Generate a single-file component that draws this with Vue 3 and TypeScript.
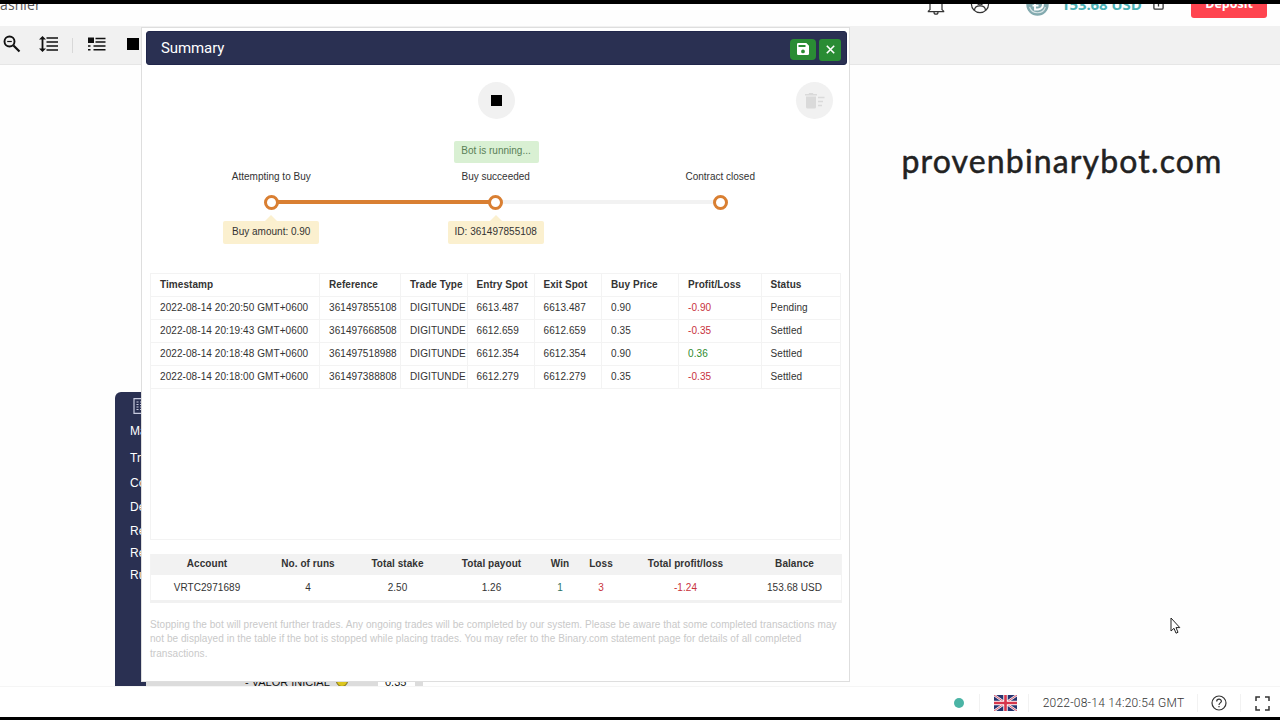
<script setup lang="ts">
interface Trade {
  time: string
  ref: string
  entry: string
  price: string
  profit: string
  status: string
}

const columns: string[] = ['Timestamp', 'Reference', 'Trade Type', 'Entry Spot', 'Exit Spot', 'Buy Price', 'Profit/Loss', 'Status']

const trades: Trade[] = [
  { time: '2022-08-14 20:20:50 GMT+0600', ref: '361497855108', entry: '6613.487', price: '0.90', profit: '-0.90', status: 'Pending' },
  { time: '2022-08-14 20:19:43 GMT+0600', ref: '361497668508', entry: '6612.659', price: '0.35', profit: '-0.35', status: 'Settled' },
  { time: '2022-08-14 20:18:48 GMT+0600', ref: '361497518988', entry: '6612.354', price: '0.90', profit: '0.36', status: 'Settled' },
  { time: '2022-08-14 20:18:00 GMT+0600', ref: '361497388808', entry: '6612.279', price: '0.35', profit: '-0.35', status: 'Settled' },
]

const totals: { label: string; value: string; tone?: string }[] = [
  { label: 'Account', value: 'VRTC2971689' },
  { label: 'No. of runs', value: '4' },
  { label: 'Total stake', value: '2.50' },
  { label: 'Total payout', value: '1.26' },
  { label: 'Win', value: '1', tone: 'win' },
  { label: 'Loss', value: '3', tone: 'neg' },
  { label: 'Total profit/loss', value: '-1.24', tone: 'neg' },
  { label: 'Balance', value: '153.68 USD' },
]

const steps: { label: string; note?: string }[] = [
  { label: 'Attempting to Buy', note: 'Buy amount: 0.90' },
  { label: 'Buy succeeded', note: 'ID: 361497855108' },
  { label: 'Contract closed' },
]

const toolbox: string[] = ['Ma', 'Tra', 'Co', 'De', 'Re', 'Re', 'Ru']
</script>

<template>
  <div class="page">
    <header class="topbar">
      <div class="topbar-row">
        <span class="cashier">ashier</span>
        <svg class="bell" width="18" height="20" viewBox="0 0 18 20" fill="none" stroke="#333" stroke-width="1.2">
          <path d="M3 15V8a6 6 0 0 1 12 0v7M.8 16.6L3 14.6M17.2 16.6L15 14.6M.8 16.6h16.4M7 17.2a2 2 0 0 0 4 0" />
        </svg>
        <svg class="user" width="20" height="20" viewBox="0 0 20 20" fill="none" stroke="#333" stroke-width="1.2">
          <circle cx="10" cy="10" r="8.6" />
          <circle cx="10" cy="7.6" r="3.2" />
          <path d="M4.5 16.4c0-3 2-4.6 5.5-4.6s5.5 1.6 5.5 4.6" />
        </svg>
        <svg class="coin" width="23" height="23" viewBox="0 0 23 23">
          <circle cx="11.5" cy="11.5" r="11.2" fill="#83aaaf" />
          <path d="M3.6 14a8.3 8.3 0 0 0 15.8 0" fill="none" stroke="#d5e3e5" stroke-width="1.2" />
          <path d="M9 5.5v11h3c3.2-.3 5-2.4 5-5.5s-1.5-5.5-4.5-5.5zM6.5 12.600h6" fill="none" stroke="#fff" stroke-width="1.9" />
        </svg>
        <span class="balance">153.68 USD</span>
        <svg class="lock" width="11" height="14" viewBox="0 0 11 14" fill="none" stroke="#333" stroke-width="1.3">
          <rect x=".9" y="5" width="9.2" height="8.2" rx="1.2" />
          <path d="M3 5V3a2.5 2.5 0 0 1 5 0v2M5.5 8v2.5" />
        </svg>
        <span class="deposit">Deposit</span>
      </div>
    </header>

    <nav class="toolbar">
      <svg class="t-zoom" width="18" height="18" viewBox="0 0 18 18" fill="none" stroke="#111">
        <circle cx="6.5" cy="6.5" r="5" stroke-width="1.9" />
        <path d="M4.2 6.5h4.6" stroke-width="1.2" />
        <path d="M10.5 10.5l6 6" stroke-width="2.2" />
      </svg>
      <svg class="t-space" width="20" height="16" viewBox="0 0 20 16">
        <path d="M3.5 0L7 3.600H4.400v8.800H7L3.500 16 0 12.400h2.600V3.600H0z" fill="#111" />
        <path d="M7.5 2H19M7.5 6H19M7.5 10H19M7.5 14H19" stroke="#111" stroke-width="1.7" />
      </svg>
      <i class="t-sep"></i>
      <svg class="t-list" width="18" height="14" viewBox="0 0 18 14">
        <path d="M0 .5h6v5.500H0z" fill="#111" />
        <path d="M7.5 1.500H17.500M7.500 5H17.500M5.500 9H17.500M5.500 12.800H17.500M0 9h2.500M0 12.800h2.500" stroke="#111" stroke-width="1.6" />
      </svg>
      <i class="t-stop"></i>
    </nav>

    <main class="workspace">
      <aside class="toolbox">
        <svg width="16" height="16" viewBox="0 0 16 16" fill="none" stroke="#c9cbe0" stroke-width="1.2">
          <path d="M1 .6h15v14.800H1z" />
          <path d="M3.500 4h2M3.500 6.500h2M3.500 9h2M3.500 11.500h2M7 4h9M7 6.500h9M7 9h9M7 11.500h9" />
        </svg>
        <span v-for="(name, i) in toolbox" :key="i" :class="'tool tool-' + i">{{ name }}</span>
      </aside>
      <div class="block">
        <span class="block-name">- VALOR INICIAL</span>
        <i class="block-coin"></i>
        <span class="block-value">0.35</span>
      </div>
      <div class="watermark">provenbinarybot.com</div>
    </main>

    <footer class="footer">
      <div class="cell"><i class="online"></i></div>
      <div class="cell flag">
        <svg width="23" height="16" viewBox="0 0 23 16">
          <rect width="23" height="16" rx="1.5" fill="#26336f" />
          <path d="M0 0l23 16M23 0L0 16" stroke="#f3eef4" stroke-width="2.4" />
          <path d="M0 0l23 16M23 0L0 16" stroke="#d6364c" stroke-width=".8" />
          <path d="M11.5 0v16M0 8h23" stroke="#fff" stroke-width="4.4" />
          <path d="M11.5 0v16M0 8h23" stroke="#d6364c" stroke-width="2.6" />
        </svg>
      </div>
      <div class="cell clock">2022-08-14 14:20:54 GMT</div>
      <div class="cell">
        <svg width="16" height="16" viewBox="0 0 16 16" fill="none" stroke="#333" stroke-width="1.2">
          <circle cx="8" cy="8" r="7" />
          <path d="M5.700 6.400C5.700 3.400 10.400 3.500 10.400 6.200 10.400 7.900 8 7.900 8 9.900M8 11v1.300" />
        </svg>
      </div>
      <div class="cell last">
        <svg width="15" height="15" viewBox="0 0 15 15" fill="none" stroke="#333" stroke-width="1.5">
          <path d="M1 5V1h4M10 1h4v4M14 10v4h-4M5 14H1v-4" />
        </svg>
      </div>
    </footer>

    <section class="modal">
      <div class="title">
        <span>Summary</span>
        <button class="action save">
          <svg width="12" height="12" viewBox="0 0 12 12">
            <path fill-rule="evenodd" d="M1.300 0H9.300L12 2.700v8A1.300 1.300 0 0 1 10.700 12H1.300A1.300 1.300 0 0 1 0 10.700V1.300A1.300 1.300 0 0 1 1.300 0zM1.500 2v2h7V2zM6 6.500a1.900 1.900 0 1 0 0 3.800 1.900 1.900 0 0 0 0-3.800z" fill="#fff" />
          </svg>
        </button>
        <button class="action">
          <svg width="9" height="9" viewBox="0 0 9 9"><path d="M.8.8l7.400 7.400M8.200.8L.8 8.200" stroke="#fff" stroke-width="1.6" /></svg>
        </button>
      </div>

      <div class="controls">
        <span class="round stop"><i></i></span>
        <span class="round clear">
          <svg width="20" height="16" viewBox="0 0 20 16">
            <path d="M1 3.500h10V14a1.500 1.500 0 0 1-1.500 1.500h-7A1.500 1.500 0 0 1 1 14zM0 1h3.500l.7-1h3.600l.7 1H12v1.500H0z" fill="#dadada" />
            <path d="M13 4.500h6.500M13 8.500h5M13 12.500h4" stroke="#dadada" stroke-width="1.5" />
          </svg>
        </span>
      </div>

      <div class="running"><span>Bot is running...</span></div>

      <div class="steps">
        <div v-for="(s, i) in steps" :key="i" class="step">
          <span class="step-label">{{ s.label }}</span>
          <div class="rail" :class="'rail-' + i"><i class="dot"></i></div>
          <span v-if="s.note" class="note">{{ s.note }}</span>
        </div>
      </div>

      <div class="trades">
        <div class="row head"><span v-for="c in columns" :key="c">{{ c }}</span></div>
        <div v-for="t in trades" :key="t.ref" class="row">
          <span>{{ t.time }}</span>
          <span>{{ t.ref }}</span>
          <span>DIGITUNDE</span>
          <span>{{ t.entry }}</span>
          <span>{{ t.entry }}</span>
          <span>{{ t.price }}</span>
          <span :class="t.profit.startsWith('-') ? 'neg' : 'pos'">{{ t.profit }}</span>
          <span>{{ t.status }}</span>
        </div>
      </div>

      <div class="totals">
        <div v-for="t in totals" :key="t.label" class="total">
          <b>{{ t.label }}</b>
          <span :class="t.tone">{{ t.value }}</span>
        </div>
      </div>

      <p class="disclaimer">
        Stopping the bot will prevent further trades. Any ongoing trades will be completed by our system. Please be aware that some completed transactions may<br />
        not be displayed in the table if the bot is stopped while placing trades. You may refer to the Binary.com statement page for details of all completed<br />
        transactions.
      </p>
    </section>

    <svg class="cursor" width="11" height="18" viewBox="0 0 11 18">
      <path d="M1 1v13l3-2.700 2 4.900 2-.9-2-4.700h3.800z" fill="#fff" stroke="#222" stroke-width="1" />
    </svg>
  </div>
</template>

<style>
body {
  margin: 0;
  background: #fff;
}
</style>

<style scoped>
* {
  box-sizing: border-box;
}
.page {
  position: relative;
  width: 1280px;
  height: 720px;
  overflow: hidden;
  display: flex;
  flex-direction: column;
  background: #fefefe;
  border-top: 4px solid #000;
  border-bottom: 3px solid #000;
  font-family: "Liberation Sans", Arial, sans-serif;
  font-size: 10px;
  color: #333;
}
svg {
  display: block;
  flex: none;
}
.topbar {
  height: 22px;
  overflow: hidden;
  flex: none;
}
.topbar-row {
  height: 44px;
  margin-top: -22px;
  display: flex;
  align-items: center;
}
.cashier {
  width: 927px;
  margin-top: 1px;
  font: 400 14px/20px "Open Sans", sans-serif;
  letter-spacing: 0.1px;
  color: #555;
}
.bell {
  margin-top: 1px;
}
.user {
  margin-left: 25px;
}
.coin {
  margin-left: 36px;
}
.balance {
  width: 91px;
  margin-left: 12px;
  margin-top: 0;
  font: 700 15px/20px "Open Sans", sans-serif;
  letter-spacing: -0.1px;
  color: #4bb0b4;
}
.lock {
  margin-top: -2px;
  margin-left: 1px;
}
.deposit {
  width: 76px;
  height: 28px;
  margin-left: 27px;
  border-radius: 3px;
  background: #ff444f;
  color: #fff;
  text-align: center;
  font: 700 12.5px/27px "Open Sans", sans-serif;
}
.toolbar {
  height: 39px;
  flex: none;
  display: flex;
  align-items: center;
  background: #f1f1f1;
  border-bottom: 1px solid #e6e6e6;
}
.t-zoom {
  margin-left: 3px;
  margin-top: -2px;
}
.t-space {
  margin-left: 18px;
  margin-top: -2px;
}
.t-sep {
  width: 1px;
  height: 15px;
  margin-left: 13px;
  background: #d8d8d8;
}
.t-list {
  margin-left: 15px;
  margin-top: -2px;
}
.t-stop {
  width: 12px;
  height: 12px;
  margin-left: 21px;
  margin-top: -2px;
  background: #000;
}
.workspace {
  position: relative;
  flex: 1;
  overflow: hidden;
}
.toolbox {
  position: absolute;
  left: 115px;
  top: 327px;
  width: 31px;
  height: 300px;
  padding: 6px 0 0 15px;
  border-radius: 6px 0 0 0;
  background: #2a3052;
  color: #fff;
  display: flex;
  flex-direction: column;
  font-size: 12px;
  line-height: 16px;
}
.toolbox svg {
  margin-left: 3px;
}
.tool {
  margin-top: 6px;
}
.tool-0 {
  margin-top: 9px;
}
.tool-1 {
  margin-top: 11px;
}
.tool-2 {
  margin-top: 9px;
}
.tool-3,
.tool-4 {
  margin-top: 8px;
}
.block {
  position: absolute;
  left: 146px;
  top: 609px;
  width: 277px;
  height: 20px;
  padding-left: 99px;
  display: flex;
  background: #dcdcdc;
  color: #111;
  font-size: 11px;
  line-height: 15px;
}
.block-name {
  width: 91px;
  line-height: 16px;
}
.block-coin {
  width: 12px;
  height: 12px;
  margin-top: 1px;
  border-radius: 50%;
  border: 1px solid #76681a;
  background: #dcc61f;
}
.block-value {
  width: 37px;
  margin-left: 30px;
  padding-left: 7px;
  background: #fff;
  height: 20px;
  line-height: 16px;
}
.watermark {
  position: absolute;
  left: 901.5px;
  top: 76px;
  font: 400 32px/40px Lato, sans-serif;
  color: #222;
  letter-spacing: 1.15px;
  -webkit-text-stroke: 0.5px #222;
}
.footer {
  height: 31px;
  flex: none;
  display: grid;
  grid-template-columns: 42px 49px 169px 43px 39px;
  justify-content: end;
  align-items: center;
  padding-top: 2px;
  background: #fff;
  border-top: 1px solid #f5f5f5;
}
.cell {
  height: 18px;
  display: flex;
  align-items: center;
  justify-content: center;
  border-right: 1px solid #f2f2f2;
}
.cell.last {
  padding-left: 3px;
  border: 0;
}
.cell.flag {
  padding-left: 3px;
}
.clock {
  padding-left: 1px;
  font: 300 12px/16px Roboto, sans-serif;
  letter-spacing: 0.22px;
  color: #333;
}
.online {
  width: 10px;
  height: 10px;
  border-radius: 50%;
  background: #4bb4a5;
}
.modal {
  position: absolute;
  left: 141px;
  top: 23px;
  width: 709px;
  height: 655px;
  padding: 3px 2px 0 4px;
  border: 1px solid #dedede;
  background: #fff;
}
.title {
  height: 34px;
  padding: 0 5px 0 14px;
  display: flex;
  align-items: center;
  gap: 3px;
  border: 1px solid #20264b;
  border-radius: 3px;
  background: #2a3052;
  color: #fff;
  font: 400 15px/20px Roboto, sans-serif;
  letter-spacing: -0.1px;
}
.title span {
  flex: 1;
}
.action {
  width: 22px;
  height: 22px;
  margin-top: 3px;
  padding: 0;
  border: 0;
  border-radius: 3px;
  background: #2a8c34;
  display: flex;
  align-items: center;
  justify-content: center;
}
.save {
  width: 26px;
  height: 21px;
  border-radius: 4px;
  margin-top: 2px;
}
.controls {
  height: 37px;
  margin-top: 17px;
  display: grid;
  grid-template-columns: 1fr 37px 1fr;
}
.round {
  width: 37px;
  height: 37px;
  border-radius: 50%;
  background: #f1f1f1;
  display: flex;
  align-items: center;
  justify-content: center;
}
.stop {
  grid-column: 2;
}
.stop i {
  width: 11px;
  height: 11px;
  background: #000;
  margin-top: -1px;
}
.clear {
  justify-self: end;
  margin-right: 14px;
}
.running {
  height: 22px;
  margin-top: 22px;
  padding-right: 1px;
  display: flex;
  justify-content: center;
}
.running span {
  width: 85px;
  line-height: 20px;
  text-align: center;
  border-radius: 2px;
  background: #d9f0d3;
  color: #5a7f57;
}
.steps {
  height: 89px;
  padding-top: 7px;
  margin-left: 13px;
  display: grid;
  grid-template-columns: repeat(3, 224.5px);
}
.step {
  display: flex;
  flex-direction: column;
  align-items: center;
}
.step-label {
  line-height: 14px;
}
.rail {
  width: 100%;
  height: 16px;
  margin-top: 10px;
  display: flex;
  justify-content: center;
  align-items: center;
  background: linear-gradient(90deg, var(--l) 50%, var(--r) 50%) center / 100% 4px no-repeat;
}
.rail-0 {
  --l: transparent;
  --r: #d97f32;
  width: calc(100% + 1px);
}
.rail-1 {
  --l: #d97f32;
  --r: #f2f2f2;
}
.rail-2 {
  --l: #f2f2f2;
  --r: transparent;
}
.dot {
  width: 15px;
  height: 15px;
  border: 3px solid #d97f32;
  border-radius: 50%;
  background: #fff;
}
.note {
  position: relative;
  width: 96px;
  height: 23px;
  margin-top: 11px;
  line-height: 22px;
  text-align: center;
  border-radius: 2px;
  background: #fbf0cf;
}
.note::before {
  content: "";
  position: absolute;
  left: 42px;
  top: -6px;
  border: 6px solid transparent;
  border-top: 0;
  border-bottom-color: #fbf0cf;
}
.trades {
  width: 691px;
  height: 267px;
  margin: 21px 0 0 4px;
  border: 1px solid #f3f3f3;
}
.row {
  height: 23px;
  display: grid;
  grid-template-columns: 169px 81px 66.5px 67px 67.5px 77px 82.5px 78.5px;
  border-bottom: 1px solid #f3f3f3;
  line-height: 22px;
  letter-spacing: 0.08px;
}
.row span {
  padding-left: 9px;
  white-space: nowrap;
  border-right: 1px solid #f3f3f3;
}
.row span:last-child {
  border: 0;
}
.head {
  font-weight: 700;
  letter-spacing: 0.06px;
}
.neg {
  color: #c8323c;
}
.pos {
  color: #2d8a2d;
}
.win {
  color: #2c7164;
}
.totals {
  width: 692px;
  height: 49px;
  margin: 14px 0 0 4px;
  display: grid;
  grid-template-columns: 112px 90px 89px 99px 38px 44px 125px 93px;
  border: 1px solid #f3f3f3;
  border-top: 0;
  border-bottom: 3px solid #f1f1f1;
  letter-spacing: 0.06px;
}
.total {
  text-align: center;
  white-space: nowrap;
}
.total b {
  display: block;
  height: 21px;
  line-height: 20px;
  background: #f2f2f2;
}
.total span {
  display: block;
  line-height: 25px;
}
.disclaimer {
  margin: 15px 0 0 4px;
  line-height: 14.3px;
  letter-spacing: 0.06px;
  color: #c9c9c9;
  white-space: nowrap;
}
.cursor {
  position: absolute;
  left: 1170px;
  top: 613px;
}
</style>
